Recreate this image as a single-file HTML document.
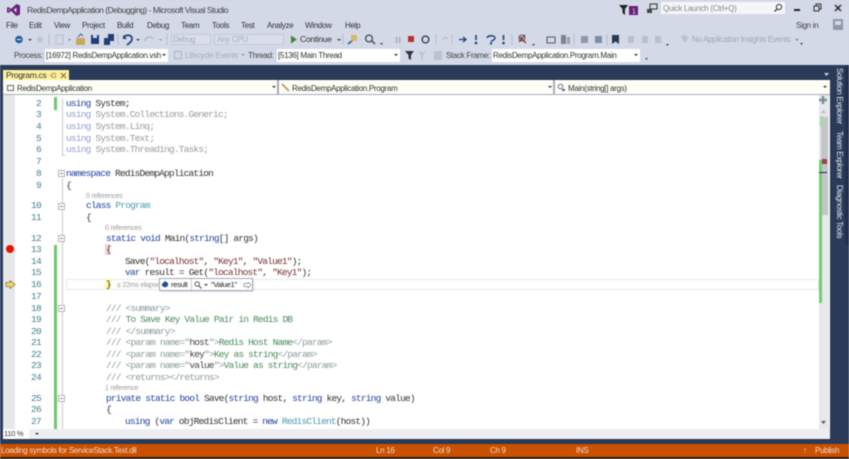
<!DOCTYPE html>
<html><head><meta charset="utf-8">
<style>
html,body{margin:0;padding:0;background:#cfd6e5}
#r{position:relative;width:849px;height:459px;overflow:hidden;background:#d3d9e6;font-family:"Liberation Sans",sans-serif;font-size:8.5px;color:#333;filter:blur(.4px)}
#r div,#r span.a,#r svg{position:absolute}
.t{white-space:pre;line-height:11px;letter-spacing:-.3px}
.m{font-size:8px;color:#333}
.c{font-family:"Liberation Mono",monospace;font-size:9.5px;letter-spacing:-.8px;white-space:pre;line-height:12px;color:#333;left:66px}
.n{font-family:"Liberation Mono",monospace;font-size:9.5px;letter-spacing:-.7px;color:#3f7f8f;line-height:12px;width:34px;text-align:right;left:7px;white-space:pre}
.k{color:#1f3f9f}.y{color:#4a9aaa}.s{color:#7a3030}.g{color:#4a8a5a}.h{color:#8a9a9a}.f{opacity:.5}
.r{font-size:7px;color:#999;white-space:pre;line-height:9px;letter-spacing:-.2px}
.b{background:#fff;box-sizing:border-box;font-size:8px;padding-left:1px;white-space:pre;color:#333;letter-spacing:-.3px}
.o{width:7px;height:7px;border:1px solid #b5b5b5;box-sizing:border-box;background:#fff;left:58px}
.o:after{content:"";position:absolute;left:1px;top:2px;width:3px;height:1px;background:#888}
.v{font-size:8px;white-space:pre;transform-origin:0 0;transform:rotate(90deg);color:#e6e9f0;line-height:10px;letter-spacing:-.3px}
.st{color:#f2d9c5;font-size:8px;line-height:12px;white-space:pre;top:445px;letter-spacing:-.3px}
</style></head>
<body><div id="r">
<!-- logo -->
<svg style="left:6px;top:3px" width="15" height="14" viewBox="0 0 15 14"><path d="M10.5 1L14 2.5V11.5L10.5 13L5 8L2.5 10L1 9.2V4.8L2.5 4L5 6ZM10.5 4.5L7.5 7L10.5 9.5ZM2.5 5.8V8.2L3.8 7Z" fill="#68217a"/></svg>
<div class="t" style="left:27px;top:5px;font-size:8.5px;color:#444;letter-spacing:-.48px">RedisDempApplication (Debugging) - Microsoft Visual Studio</div>
<!-- title right -->
<svg style="left:618px;top:3px" width="28" height="14" viewBox="0 0 28 14"><path d="M1 2H10L7 6V12L4.5 10V6Z" fill="#222"/><rect x="11" y="3" width="9" height="9" fill="#68217a"/><text x="14" y="10.5" font-size="7" fill="#ddd" font-family="Liberation Sans">1</text></svg>
<svg style="left:645px;top:3px" width="14" height="12" viewBox="0 0 14 12"><rect x="5" y="1" width="7" height="5" fill="none" stroke="#333"/><rect x="2" y="6" width="5" height="4" fill="#444"/></svg>
<div style="left:661px;top:2px;width:124px;height:12px;background:#f4f6fa"></div>
<div class="t" style="left:663px;top:3px;font-size:8px;color:#888">Quick Launch (Ctrl+Q)</div>
<svg style="left:773px;top:3px" width="10" height="10" viewBox="0 0 10 10"><circle cx="6" cy="4" r="2.6" fill="none" stroke="#444" stroke-width="1.1"/><path d="M4 6L1.5 8.5" stroke="#444" stroke-width="1.3"/></svg>
<div style="left:794px;top:9px;width:6px;height:2px;background:#222"></div>
<svg style="left:813px;top:3px" width="9" height="9" viewBox="0 0 9 9"><rect x="3" y="1" width="5" height="5" fill="none" stroke="#333"/><rect x="1" y="3" width="5" height="5" fill="#d3d9e6" stroke="#333"/></svg>
<svg style="left:834px;top:4px" width="8" height="8" viewBox="0 0 8 8"><path d="M1 1L7 7M7 1L1 7" stroke="#222" stroke-width="1.4"/></svg>
<div class="t" style="left:796px;top:20px;font-size:8px;color:#444">Sign in</div>
<div style="left:833px;top:19px;width:10px;height:11px;background:#8f97a8"></div><div style="left:835px;top:21px;width:6px;height:4px;background:#d3d9e6"></div>
<!-- menu -->
<div class="t m" style="left:6px;top:20px">File</div><div class="t m" style="left:29px;top:20px">Edit</div><div class="t m" style="left:54px;top:20px">View</div><div class="t m" style="left:82px;top:20px">Project</div><div class="t m" style="left:117px;top:20px">Build</div><div class="t m" style="left:147px;top:20px">Debug</div><div class="t m" style="left:181px;top:20px">Team</div><div class="t m" style="left:212px;top:20px">Tools</div><div class="t m" style="left:241px;top:20px">Test</div><div class="t m" style="left:267px;top:20px">Analyze</div><div class="t m" style="left:305px;top:20px">Window</div><div class="t m" style="left:345px;top:20px">Help</div>
<!-- toolbar 1 -->
<svg style="left:0;top:32px" width="849" height="16" viewBox="0 0 849 16">
<circle cx="19" cy="7.5" r="3.8" fill="#1c5f9e"/><path d="M17 7.5H21" stroke="#fff"/><circle cx="40" cy="7.5" r="3" fill="#bcc4d2"/>
<path d="M28 7h4l-2 2z" fill="#444"/><path d="M49 2V13" stroke="#b5bccb"/>
<rect x="56" y="3" width="7" height="9" fill="none" stroke="#b7becc"/><path d="M68 7h3l-1.5 2z" fill="#888"/>
<rect x="76" y="6" width="9" height="7" fill="#c9a75b"/><path d="M78 5l3-3 2 2" stroke="#3a6a9a" fill="none"/>
<rect x="91" y="3" width="8" height="9" fill="#1e3f7a"/><rect x="93" y="3" width="4" height="3" fill="#d3d9e6"/>
<rect x="104" y="6" width="6" height="7" fill="#1e3f7a"/><rect x="108" y="2" width="6" height="7" fill="#1e3f7a"/>
<path d="M118 2V13" stroke="#b5bccb"/>
<path d="M124 5C127 2 132 3 132 7C132 10 129 11 127 13" stroke="#1e3f7a" stroke-width="1.7" fill="none"/><path d="M123 3V7H127" fill="#1e3f7a"/>
<path d="M136 7h4l-2 2z" fill="#444"/>
<path d="M145 9C146 4 152 4 153 7" stroke="#b0b8c6" stroke-width="1.4" fill="none"/><path d="M159 7h3l-1.5 2z" fill="#999"/>
<path d="M167 2V13" stroke="#b5bccb"/>
<path d="M291 3.5L297 7.5L291 11.5Z" fill="#3a8a3a"/><path d="M337 7h4l-2 2z" fill="#444"/>
<path d="M343 2V13" stroke="#b5bccb"/>
<path d="M348 12L353 8" stroke="#2a5a9a" stroke-width="1.5"/><rect x="351" y="3" width="6" height="6" fill="#d8b866"/>
<circle cx="369" cy="6.5" r="3.4" fill="none" stroke="#3a4a5a" stroke-width="1.3"/><path d="M372 9L375 12" stroke="#3a4a5a" stroke-width="1.4"/><path d="M380 11h3l-1.5 2z" fill="#444"/>
<rect x="396" y="5" width="1.5" height="6" fill="#aab"/><rect x="399" y="5" width="1.5" height="6" fill="#aab"/>
<rect x="408" y="4" width="6" height="6" fill="#b8322a"/>
<circle cx="425.5" cy="7.5" r="3.4" fill="none" stroke="#33435a" stroke-width="1.4"/>
<path d="M436 2V13" stroke="#b5bccb"/><path d="M443 8C443 5 447 5 448 7" stroke="#b0b8c6" fill="none"/><path d="M452 2V13" stroke="#b5bccb"/>
<path d="M459 7.5H465M463 5L466 7.5L463 10" stroke="#1e3f7a" stroke-width="1.3" fill="none"/>
<path d="M476 3V8" stroke="#1e3f7a" stroke-width="1.6"/><circle cx="476" cy="11" r="1.3" fill="#1e3f7a"/>
<path d="M487 6C488 3 495 3 495 6C495 8 492 8 491 10" stroke="#1e3f7a" stroke-width="1.4" fill="none"/><circle cx="491" cy="11.5" r="1.1" fill="#1e3f7a"/>
<path d="M503.500 3V8" stroke="#1e3f7a" stroke-width="1.6"/><circle cx="503.500" cy="11" r="1.3" fill="#1e3f7a"/>
<path d="M512 2V13" stroke="#b5bccb"/>
<circle cx="522" cy="6" r="3" fill="none" stroke="#555"/><path d="M519 4L526 11" stroke="#b8322a" stroke-width="1.5"/><path d="M525 3L519 10" stroke="#333"/><path d="M532 12h3l-1.500 2z" fill="#444"/>
<rect x="547" y="5" width="8" height="6" fill="none" stroke="#556"/><rect x="561" y="3" width="5" height="9" fill="#7a8494"/><rect x="567" y="5" width="3" height="7" fill="#9aa3b2"/>
<path d="M574 2V13" stroke="#b5bccb"/>
<rect x="581" y="4" width="7" height="7" fill="#8f97a8"/><rect x="595" y="4" width="7" height="7" fill="#7a8ea8"/>
<path d="M607 2V13" stroke="#b5bccb"/>
<path d="M612 3H619V12L615.500 9.500L612 12Z" fill="#2a3a50"/>
<rect x="628" y="4" width="6" height="7" fill="#b8c0ce"/><rect x="642" y="4" width="6" height="7" fill="#b8c0ce"/><rect x="655" y="4" width="6" height="7" fill="#b8c0ce"/>
<path d="M666 12h3l-1.500 2z" fill="#444"/>
<path d="M681 4C683 3 686 3 688 5L686 10H684Z" fill="#b9c1cf"/>
</svg>
<div style="left:171px;top:34px;width:40px;height:11px;background:#d9deea;border:1px solid #c3c9d6;box-sizing:border-box"></div>
<div class="t" style="left:173px;top:34px;font-size:8px;color:#a5adbb">Debug</div>
<div style="left:214px;top:34px;width:70px;height:11px;background:#d9deea;border:1px solid #c3c9d6;box-sizing:border-box"></div>
<div class="t" style="left:217px;top:34px;font-size:8px;color:#a5adbb">Any CPU</div>
<div class="t" style="left:300px;top:34px;font-size:8.5px;color:#333">Continue</div>
<div class="t" style="left:692px;top:34px;font-size:8px;color:#a0a8b6">No Application Insights Events</div>
<svg style="left:795px;top:38px" width="20" height="8" viewBox="0 0 20 8"><path d="M0 1h4l-2 2z" fill="#888"/><path d="M5 5h3l-1.500 2z" fill="#444"/></svg>
<!-- toolbar 2 -->
<div class="t" style="left:14px;top:50px;font-size:8px;color:#444">Process:</div>
<div class="b" style="left:45px;top:49px;width:123px;height:13px;line-height:13px">[16972] RedisDempApplication.vsh</div>
<svg style="left:162px;top:54px" width="5" height="4"><path d="M0 0h4l-2 2z" fill="#333"/></svg>
<svg style="left:174px;top:51px" width="9" height="9"><rect x=".5" y=".5" width="7" height="7" fill="none" stroke="#aab2c0"/></svg>
<div class="t" style="left:185px;top:50px;font-size:8px;color:#a5adbb">Lifecycle Events</div>
<svg style="left:241px;top:54px" width="5" height="4"><path d="M0 0h4l-2 2z" fill="#999"/></svg>
<div class="t" style="left:248px;top:50px;font-size:8px;color:#444">Thread:</div>
<div class="b" style="left:277px;top:49px;width:123px;height:13px;line-height:13px">[5136] Main Thread</div>
<svg style="left:394px;top:54px" width="5" height="4"><path d="M0 0h4l-2 2z" fill="#333"/></svg>
<svg style="left:404px;top:50px" width="28" height="11" viewBox="0 0 28 11"><path d="M1 1H10L7 5V10L4.500 8.500V5Z" fill="#333"/><path d="M14 2H22L19 5V10L17 9V5Z" fill="#bcc3d0"/></svg>
<div style="left:434px;top:51px;width:8px;height:9px;background:#bcc3d0"></div>
<div class="t" style="left:446px;top:50px;font-size:8px;color:#444">Stack Frame:</div>
<div class="b" style="left:492px;top:49px;width:148px;height:13px;line-height:13px">RedisDempApplication.Program.Main</div>
<svg style="left:634px;top:54px" width="12" height="8" style="overflow:visible"><path d="M0 0h4l-2 2z" fill="#333"/></svg>
<svg style="left:645px;top:58px" width="5" height="4"><path d="M0 0h3l-1.500 2z" fill="#555"/></svg>
<!-- dark band -->
<div style="left:0;top:65px;width:849px;height:394px;background:#2a3b59"></div>
<div style="left:3px;top:70px;width:66px;height:11px;background:#fdf0a0"></div>
<div class="t" style="left:6px;top:70px;font-size:8.5px;color:#333">Program.cs</div>
<svg style="left:49px;top:72px" width="8" height="7"><path d="M.5 3.500H3M3 1.500V5.500H6.500V1.500Z" fill="none" stroke="#a08a4a" stroke-width=".8"/></svg>
<svg style="left:60px;top:72px" width="8" height="8"><path d="M1 1L6 6M6 1L1 6" stroke="#8a6a3a" stroke-width="1.100"/></svg>
<svg style="left:824px;top:73px" width="6" height="4"><path d="M0 0h5l-2.500 3z" fill="#cdd3e0"/></svg>
<!-- nav bar -->
<div style="left:3px;top:80px;width:827px;height:15px;background:#fefef6;border-bottom:1px solid #a5acbb;box-sizing:border-box"></div>
<div style="left:7px;top:85px;width:7px;height:6px;border:1px solid #667;box-sizing:border-box"></div>
<div class="t" style="left:17px;top:83px;font-size:8px;color:#333">RedisDempApplication</div>
<svg style="left:272px;top:86px" width="5" height="4"><path d="M0 0h4l-2 2z" fill="#333"/></svg>
<div style="left:277px;top:80px;width:2px;height:15px;background:#a5acbb"></div>
<svg style="left:281px;top:83px" width="9" height="9"><path d="M1 1L8 8" stroke="#b89a55" stroke-width="1.800"/></svg>
<div class="t" style="left:292px;top:83px;font-size:8px;color:#333">RedisDempApplication.Program</div>
<svg style="left:548px;top:86px" width="5" height="4"><path d="M0 0h4l-2 2z" fill="#333"/></svg>
<div style="left:553px;top:80px;width:2px;height:15px;background:#a5acbb"></div>
<svg style="left:557px;top:83px" width="9" height="9"><circle cx="3.500" cy="3.500" r="2.300" fill="none" stroke="#7a6a9a"/><rect x="5" y="6" width="3" height="2" fill="#666"/></svg>
<div class="t" style="left:568px;top:83px;font-size:8px;color:#333">Main(string[] args)</div>
<svg style="left:823px;top:86px" width="5" height="4"><path d="M0 0h4l-2 2z" fill="#333"/></svg>
<!-- editor -->
<div style="left:3px;top:95px;width:827px;height:334px;background:#fff;overflow:hidden"></div>
<div style="left:3px;top:95px;width:12px;height:334px;background:#e6e7e9"></div>
<!-- change bars -->
<div style="left:54px;top:97px;width:3px;height:13px;background:#6cc96c"></div>
<div style="left:54px;top:245px;width:3px;height:184px;background:#6cc96c"></div>
<!-- fold line -->
<div style="left:62px;top:98px;width:1px;height:58px;background:#c8c8c8"></div>
<div style="left:62px;top:155px;width:3px;height:1px;background:#c8c8c8"></div>
<div style="left:62px;top:178px;width:1px;height:251px;background:#c8c8c8"></div>
<div class="o" style="top:170px"></div><div class="o" style="top:203px"></div><div class="o" style="top:235px"></div><div class="o" style="top:305px"></div><div class="o" style="top:395px"></div>
<!-- breakpoint + arrow -->
<div style="left:6px;top:245px;width:8px;height:8px;border-radius:50%;background:#e51400"></div>
<svg style="left:5px;top:280px" width="11" height="9" viewBox="0 0 11 9"><path d="M1 2.500H5V.5L10 4.500L5 8.500V6.500H1Z" fill="#f4d86a" stroke="#8a7a3a" stroke-width=".8"/></svg>
<!-- numbers -->
<div class="n" style="top:98px">2</div><div class="n" style="top:109px">3</div><div class="n" style="top:121px">4</div><div class="n" style="top:133px">5</div><div class="n" style="top:144px">6</div><div class="n" style="top:156px">7</div><div class="n" style="top:168px">8</div><div class="n" style="top:180px">9</div><div class="n" style="top:200px">10</div><div class="n" style="top:212px">11</div><div class="n" style="top:233px">12</div><div class="n" style="top:244px">13</div><div class="n" style="top:256px">14</div><div class="n" style="top:267px">15</div><div class="n" style="top:279px">16</div><div class="n" style="top:291px">17</div><div class="n" style="top:303px">18</div><div class="n" style="top:314px">19</div><div class="n" style="top:326px">20</div><div class="n" style="top:337px">21</div><div class="n" style="top:349px">22</div><div class="n" style="top:360px">23</div><div class="n" style="top:372px">24</div><div class="n" style="top:393px">25</div><div class="n" style="top:404px">26</div><div class="n" style="top:416px">27</div>
<!-- code -->
<div class="c" style="top:98px"><span class="k">using</span> System;</div>
<div class="c f" style="top:109px"><span class="k">using</span> System.Collections.Generic;</div>
<div class="c f" style="top:121px"><span class="k">using</span> System.Linq;</div>
<div class="c f" style="top:133px"><span class="k">using</span> System.Text;</div>
<div class="c f" style="top:144px"><span class="k">using</span> System.Threading.Tasks;</div>
<div class="c" style="top:168px"><span class="k">namespace</span> RedisDempApplication</div>
<div class="c" style="top:180px">{</div>
<div class="r" style="left:86px;top:192px">0 references</div>
<div class="c" style="top:200px;left:86px"><span class="k">class</span> <span class="y">Program</span></div>
<div class="c" style="top:212px;left:86px">{</div>
<div class="r" style="left:105px;top:224px">0 references</div>
<div class="c" style="top:233px;left:106px"><span class="k">static void</span> Main(<span class="k">string</span>[] args)</div>
<div style="left:105px;top:244px;width:5px;height:11px;background:#e9d6d6"></div>
<div class="c" style="top:244px;left:106px;color:#7a1f1f">{</div>
<div class="c" style="top:256px;left:125px">Save(<span class="s">"localhost"</span>, <span class="s">"Key1"</span>, <span class="s">"Value1"</span>);</div>
<div class="c" style="top:267px;left:125px"><span class="k">var</span> result = Get(<span class="s">"localhost"</span>, <span class="s">"Key1"</span>);</div>
<!-- current line outline -->
<div style="left:66px;top:279px;width:753px;height:11px;border:1px solid #e8e8e8;box-sizing:border-box"></div>
<div style="left:105px;top:279px;width:6px;height:11px;background:#fdf6a8"></div>
<div class="c" style="top:279px;left:106px">}</div>
<div class="r" style="left:117px;top:281px">≤ 22ms elapsed</div>
<!-- datatip -->
<div style="left:159px;top:278px;width:94px;height:13px;background:#fff;border:1px solid #9fa8bb;box-sizing:border-box;box-shadow:1px 1px 1px #ddd"></div>
<div style="left:191px;top:279px;width:1px;height:11px;background:#ccc"></div>
<svg style="left:161px;top:280px" width="8" height="8"><path d="M1 4L4 1L7 3V6L4 7.500L1 6Z" fill="#1e4f8a"/></svg>
<div class="t" style="left:171px;top:279px;font-size:7.500px;color:#222">result</div>
<svg style="left:194px;top:281px" width="8" height="8"><circle cx="3.200" cy="3" r="2.200" fill="none" stroke="#555"/><path d="M5 5L7.500 7.500" stroke="#555" stroke-width="1.200"/></svg>
<svg style="left:204px;top:284px" width="5" height="4"><path d="M0 0h4l-2 2z" fill="#444"/></svg>
<div class="t" style="left:211px;top:279px;font-size:7.500px;color:#222">"Value1"</div>
<svg style="left:243px;top:282px" width="9" height="7"><path d="M1 1.500H5V0L8 3L5 6V4.500H1Z" fill="#fff" stroke="#889" stroke-width=".7"/></svg>
<div class="c" style="top:303px;left:106px"><span class="h">/// &lt;summary&gt;</span></div>
<div class="c" style="top:314px;left:106px"><span class="h">///</span> <span class="g">To Save Key Value Pair in Redis DB</span></div>
<div class="c" style="top:326px;left:106px"><span class="h">/// &lt;/summary&gt;</span></div>
<div class="c" style="top:337px;left:106px"><span class="h">/// &lt;param name="</span><span style="color:#444">host</span><span class="h">"&gt;</span><span class="g">Redis Host Name</span><span class="h">&lt;/param&gt;</span></div>
<div class="c" style="top:349px;left:106px"><span class="h">/// &lt;param name="</span><span style="color:#444">key</span><span class="h">"&gt;</span><span class="g">Key as string</span><span class="h">&lt;/param&gt;</span></div>
<div class="c" style="top:360px;left:106px"><span class="h">/// &lt;param name="</span><span style="color:#444">value</span><span class="h">"&gt;</span><span class="g">Value as string</span><span class="h">&lt;/param&gt;</span></div>
<div class="c" style="top:372px;left:106px"><span class="h">/// &lt;returns&gt;&lt;/returns&gt;</span></div>
<div class="r" style="left:105px;top:384px">1 reference</div>
<div class="c" style="top:393px;left:106px"><span class="k">private static bool</span> Save(<span class="k">string</span> host, <span class="k">string</span> key, <span class="k">string</span> value)</div>
<div class="c" style="top:404px;left:106px">{</div>
<div class="c" style="top:416px;left:125px"><span class="k">using</span> (<span class="k">var</span> objRedisClient = <span class="k">new</span> <span class="y">RedisClient</span>(host))</div>
<!-- scrollbar -->
<div style="left:819px;top:95px;width:10px;height:334px;background:#e6e8ec"></div>
<svg style="left:819px;top:96px" width="9" height="9"><path d="M4 0V8M0 4H8" stroke="#7f8c98" stroke-width="2.500"/></svg>
<svg style="left:821px;top:110px" width="6" height="4"><path d="M0 3h5l-2.500-3z" fill="#b5b9c2"/></svg>
<svg style="left:821px;top:421px" width="6" height="4"><path d="M0 0h5l-2.500 3z" fill="#555"/></svg>
<div style="left:821px;top:117px;width:7px;height:98px;background:#c3c5c9"></div>
<div style="left:820px;top:116px;width:3px;height:11px;background:#a6d8a6"></div>
<div style="left:819px;top:160px;width:3px;height:143px;background:#74cc74"></div>
<div style="left:822px;top:159px;width:5px;height:5px;background:#a04040"></div>
<div style="left:819px;top:172px;width:8px;height:1px;background:#1a1a70"></div>
<!-- hscroll -->
<div style="left:3px;top:429px;width:827px;height:10px;background:#eceef2"></div>
<div style="left:3px;top:429px;width:26px;height:10px;background:#fff"></div>
<div class="t" style="left:4px;top:429px;font-size:7.500px;line-height:10px">110 %</div>
<svg style="left:35px;top:433px" width="5" height="4"><path d="M0 0h4l-2 2z" fill="#333"/></svg>
<!-- status -->
<div style="left:0;top:444px;width:849px;height:13px;background:#ca5100"></div>
<div style="left:0;top:457px;width:849px;height:2px;background:#241c12"></div>
<div class="st" style="left:1px">Loading symbols for ServiceStack.Text.dll</div>
<div class="st" style="left:376px">Ln 16</div><div class="st" style="left:433px">Col 9</div><div class="st" style="left:490px">Ch 9</div><div class="st" style="left:576px">INS</div>
<div class="st" style="left:803px">↑</div><div class="st" style="left:815px">Publish</div>
<!-- side labels -->
<div style="left:845px;top:65px;width:4px;height:180px;background:#22304a"></div>
<div class="v" style="left:844px;top:68px">Solution Explorer</div>
<div class="v" style="left:844px;top:131px">Team Explorer</div>
<div class="v" style="left:844px;top:185px">Diagnostic Tools</div>
</div></body></html>
